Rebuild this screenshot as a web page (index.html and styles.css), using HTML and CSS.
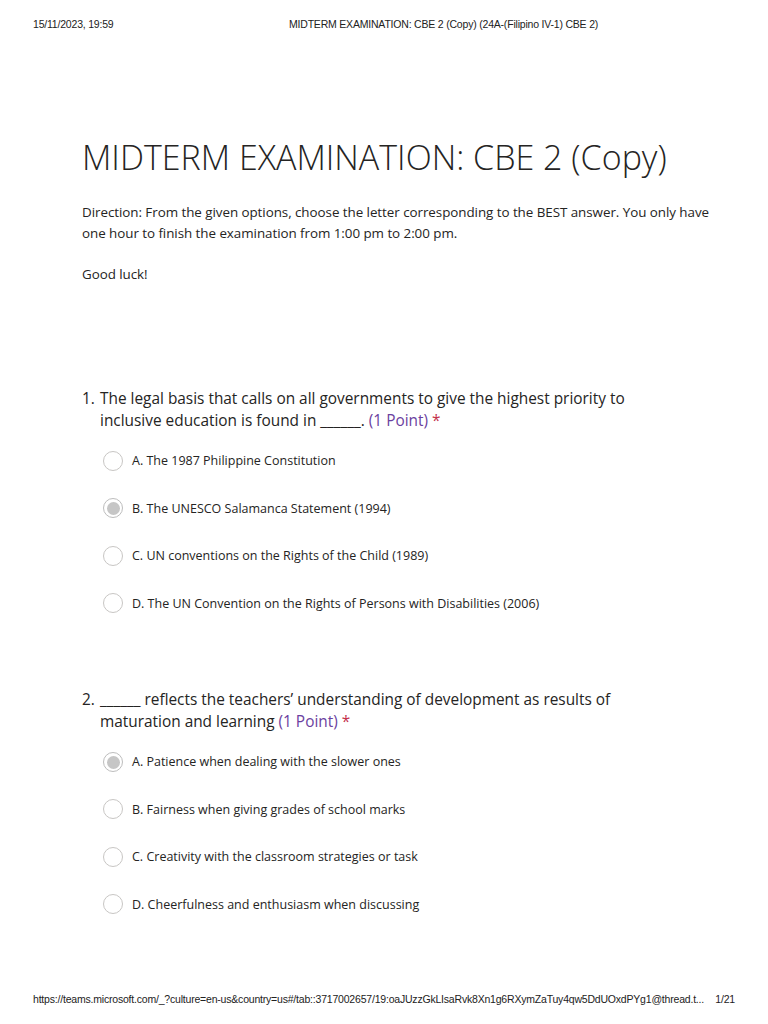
FILE: index.html
```html
<!DOCTYPE html>
<html lang="en">
<head>
  <meta charset="UTF-8">
  <meta name="viewport" content="width=device-width, initial-scale=1.0">
  <title>MIDTERM EXAMINATION: CBE 2 (Copy) (24A-(Filipino IV-1) CBE 2)</title>
  <link rel="stylesheet" href="styles.css">
</head>
<body>
  <div class="print-header">
    <span class="print-date">15/11/2023, 19:59</span>
    <span class="print-title">MIDTERM EXAMINATION: CBE 2 (Copy) (24A-(Filipino IV-1) CBE 2)</span>
  </div>

  <div class="form">
    <h1 class="form-title">MIDTERM EXAMINATION: CBE 2 (Copy)</h1>
    <p class="form-desc">Direction: From the given options, choose the letter corresponding to the BEST answer. You only have one hour to finish the examination from 1:00 pm to 2:00 pm.</p>
    <p class="form-desc">Good luck!</p>

    <div class="question">
      <div class="question-title">
        <span class="question-num">1.</span>
        <p class="question-text"><span>The legal basis that calls on all governments to give the highest priority to inclusive education is found in ______.</span> <span class="points">(1 Point)</span> <span class="required">*</span></p>
      </div>
      <div class="choices">
        <div class="choice"><span class="radio"></span><span>A. The 1987 Philippine Constitution</span></div>
        <div class="choice"><span class="radio radio-checked"></span><span>B. The UNESCO Salamanca Statement (1994)</span></div>
        <div class="choice"><span class="radio"></span><span>C. UN conventions on the Rights of the Child (1989)</span></div>
        <div class="choice"><span class="radio"></span><span>D. The UN Convention on the Rights of Persons with Disabilities (2006)</span></div>
      </div>
    </div>

    <div class="question">
      <div class="question-title">
        <span class="question-num">2.</span>
        <p class="question-text"><span>______ reflects the teachers’ understanding of development as results of maturation and learning</span> <span class="points">(1 Point)</span> <span class="required">*</span></p>
      </div>
      <div class="choices">
        <div class="choice"><span class="radio radio-checked"></span><span>A. Patience when dealing with the slower ones</span></div>
        <div class="choice"><span class="radio"></span><span>B. Fairness when giving grades of school marks</span></div>
        <div class="choice"><span class="radio"></span><span>C. Creativity with the classroom strategies or task</span></div>
        <div class="choice"><span class="radio"></span><span>D. Cheerfulness and enthusiasm when discussing</span></div>
      </div>
    </div>
  </div>

  <div class="print-footer">
    <span class="print-url">https://teams.microsoft.com/_?culture=en-us&amp;country=us#/tab::3717002657/19:oaJUzzGkLIsaRvk8Xn1g6RXymZaTuy4qw5DdUOxdPYg1@thread.t...</span>
    <span class="print-page">1/21</span>
  </div>
</body>
</html>
```

FILE: styles.css
```css
/* Print page styles */
body {
  margin: 0;
  padding: 0;
  background-color: #fff;
  color: #252423;
  font-family: "Open Sans", "Noto Sans", sans-serif;
  width: 768px;
  height: 1024px;
  position: relative;
  overflow: hidden;
}

.print-header {
  display: flex;
  height: 48px;
  align-items: center;
  padding-left: 33px;
  font-family: "Liberation Sans", Arial, sans-serif;
  font-size: 10.5px;
  color: #222;
  letter-spacing: -0.2px;
}

.print-date {
  width: 256px;
}

.form {
  padding: 87px 40px 0 82px;
}

.form-title {
  margin: 0;
  font-size: 34px;
  font-weight: 300;
  line-height: 44px;
  color: #252423;
}

.form-desc {
  margin: 23px 0 0;
  font-size: 13.4px;
  line-height: 21px;
  color: #252423;
  letter-spacing: -0.05px;
}

.form-desc + .form-desc {
  margin-top: 20px;
}

.question {
  margin-top: 103px;
}

.question + .question {
  margin-top: 62px;
}

.question-title {
  display: flex;
  font-size: 15.4px;
  line-height: 22px;
  padding-right: 80px;
}

.question-num {
  width: 18px;
  flex-shrink: 0;
}

.question-text {
  margin: 0;
}

.points {
  color: #6b3fa0;
}

.required {
  color: #c4314b;
}

.choices {
  margin-top: 5px;
  padding-left: 21px;
}

.choice {
  display: flex;
  align-items: center;
  height: 47.5px;
  font-size: 12.5px;
  color: #252423;
}

.radio {
  box-sizing: border-box;
  width: 20px;
  height: 20px;
  border: 1px solid #c8c6c4;
  border-radius: 50%;
  margin-right: 9px;
  flex-shrink: 0;
}

.radio-checked {
  border: 1.5px solid #bdbdbd;
  padding: 2.5px;
  background-clip: content-box;
  background-color: #c6c6c6;
}

.print-footer {
  position: absolute;
  left: 33px;
  right: 33px;
  top: 993px;
  display: flex;
  justify-content: space-between;
  font-family: "Liberation Sans", Arial, sans-serif;
  font-size: 10.5px;
  color: #222;
  letter-spacing: -0.2px;
}
```
